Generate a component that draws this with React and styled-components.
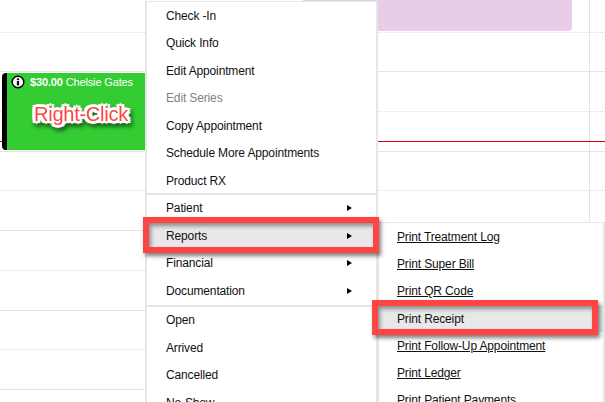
import React from "react"
import styled, { createGlobalStyle } from "styled-components"

const GlobalStyle = createGlobalStyle`
  html, body {
    margin: 0;
    padding: 0;
    background: #fff;
    font-family: "Liberation Sans", Arial, sans-serif;
  }
`

const Page = styled.div`
  position: relative;
  width: 605px;
  height: 402px;
  overflow: hidden;
  background: #fff;
`

const Columns = styled.div`
  display: flex;
  height: 100%;
`

const DayColumn = styled.div`
  width: ${p => p.$width};
  flex: ${p => (p.$grow ? 1 : "none")};
  box-sizing: border-box;
  border-right: ${p => (p.$grow ? "none" : "1px solid #e4e4e4")};
`

const Slot = styled.div`
  box-sizing: border-box;
  height: ${p => p.$height}px;
  border-bottom: 1px ${p => (p.$hour ? "solid #e4e4e4" : "dotted #dddddd")};
`

const PinkAppointment = styled.div`
  position: absolute;
  left: 303px;
  top: 0;
  width: 269px;
  height: 31px;
  background: #e8cce8;
  border-bottom-right-radius: 4px;
`

const NowLine = styled.div`
  position: absolute;
  left: 0;
  right: 0;
  top: 141px;
  height: 1px;
  background: #e60000;
`

const GreenAppointment = styled.div`
  position: absolute;
  left: 2px;
  top: 73px;
  width: 143px;
  height: 77px;
  box-sizing: border-box;
  background: #33cc33;
  border-left: 5px solid #000;
  border-radius: 4px 0 0 4px;
  color: #fff;
`

const AppointmentHead = styled.div`
  display: flex;
  align-items: center;
  gap: 5px;
  padding: 1px 0 0 4px;
  height: 15px;
  font-size: 11px;
  letter-spacing: -0.15px;
  white-space: nowrap;
`

const Price = styled.span`
  font-weight: bold;
  margin-right: 3px;
`

const Callout = styled.div`
  margin: 13px 0 0 27px;
  font-size: 20px;
  line-height: 24px;
  letter-spacing: -0.25px;
  color: #ff4444;
  white-space: nowrap;
  text-shadow:
    2px 0 0 #fff, -2px 0 0 #fff, 0 2px 0 #fff, 0 -2px 0 #fff,
    2px 2px 0 #fff, -2px 2px 0 #fff, 2px -2px 0 #fff, -2px -2px 0 #fff,
    3px 0 1px #fff, -3px 0 1px #fff, 0 3px 1px #fff, 0 -3px 1px #fff,
    3px 2px 1px #fff, -3px 2px 1px #fff, 3px -2px 1px #fff, -3px -2px 1px #fff;
  filter: drop-shadow(2px 3px 2px rgba(0, 0, 0, 0.55));
`

const Menu = styled.div`
  position: absolute;
  left: ${p => p.$left}px;
  top: ${p => p.$top}px;
  width: ${p => p.$width}px;
  box-sizing: border-box;
  background: #fff;
  border: 2px solid #e6e6e6;
  border-top-width: 1px;
  font-size: 12px;
  letter-spacing: -0.14px;
  color: #111;
`

const MenuGroup = styled.div`
  &:first-child {
    margin-bottom: -2px;
  }

  & + & {
    position: relative;
    border-top: 2px solid #e6e6e6;
  }
`

const Row = styled.div`
  position: relative;
  display: flex;
  align-items: center;
  justify-content: space-between;
  box-sizing: border-box;
  height: ${p => p.$height}px;
  padding: 0 ${p => p.$right}px 0 ${p => p.$left}px;
  white-space: nowrap;
  background: ${p => (p.$active ? "#e8e8e8" : "transparent")};
  color: ${p => (p.$muted ? "#808080" : "inherit")};
  text-decoration: ${p => (p.$link ? "underline" : "none")};
`

const Marker = styled.span`
  position: absolute;
  left: ${p => p.$left}px;
  right: ${p => p.$right}px;
  top: -5px;
  bottom: -3px;
  z-index: 5;
  border: 6px solid #ff4444;
  box-shadow:
    2px 3px 4px rgba(0, 0, 0, 0.5),
    inset 2px 3px 4px rgba(0, 0, 0, 0.4);
`

const Arrow = styled.span`
  width: 0;
  height: 0;
  border-left: 5px solid #000;
  border-top: 3.5px solid transparent;
  border-bottom: 3.5px solid transparent;
`

const slots = [
  [33, false], [39, true], [40, false], [40, true], [39, false],
  [40, true], [40, false], [40, true], [39, false], [40, true],
]

const InfoIcon = () => (
  <svg width="14" height="14" viewBox="0 0 14 14">
    <circle cx="7" cy="7" r="5.8" fill="#fff" stroke="#000" strokeWidth="1.4" />
    <rect x="5.9" y="6" width="2.2" height="4.4" fill="#000" />
    <rect x="5.9" y="3.4" width="2.2" height="1.8" fill="#000" />
  </svg>
)

const mainMenu = [
  [
    { label: "Check -In" },
    { label: "Quick Info" },
    { label: "Edit Appointment" },
    { label: "Edit Series", muted: true },
    { label: "Copy Appointment" },
    { label: "Schedule More Appointments" },
    { label: "Product RX" },
  ],
  [
    { label: "Patient", sub: true },
    { label: "Reports", sub: true, active: true },
    { label: "Financial", sub: true },
    { label: "Documentation", sub: true },
  ],
  [
    { label: "Open" },
    { label: "Arrived" },
    { label: "Cancelled" },
    { label: "No-Show" },
  ],
]

const reportItems = [
  { label: "Print Treatment Log" },
  { label: "Print Super Bill" },
  { label: "Print QR Code" },
  { label: "Print Receipt", active: true },
  { label: "Print Follow-Up Appointment" },
  { label: "Print Ledger" },
  { label: "Print Patient Payments" },
]

const App = () => (
  <Page>
    <GlobalStyle />
    <Columns>
      <DayColumn $width="590px">
        {slots.map(([height, hour], i) => (
          <Slot key={i} $height={height} $hour={hour} />
        ))}
      </DayColumn>
      <DayColumn $grow>
        {slots.map(([height, hour], i) => (
          <Slot key={i} $height={height} $hour={hour} />
        ))}
      </DayColumn>
    </Columns>
    <PinkAppointment />
    <NowLine />
    <GreenAppointment>
      <AppointmentHead>
        <InfoIcon />
        <span>
          <Price>$30.00</Price>Chelsie Gates
        </span>
      </AppointmentHead>
      <Callout>Right-Click</Callout>
    </GreenAppointment>
    <Menu $left={145} $top={1} $width={233}>
      {mainMenu.map((group, i) => (
        <MenuGroup key={i}>
          {group.map(item => (
            <Row
              key={item.label}
              $height={27.5}
              $left={19}
              $right={24}
              $active={item.active}
              $muted={item.muted}
            >
              {item.label}
              {item.sub && <Arrow />}
              {item.active && <Marker $left={-4} $right={-3} />}
            </Row>
          ))}
        </MenuGroup>
      ))}
    </Menu>
    <Menu $left={377} $top={222} $width={228}>
      {reportItems.map(item => (
        <Row
          key={item.label}
          $height={27.3}
          $left={18}
          $right={0}
          $link={!item.active}
          $active={item.active}
        >
          {item.label}
          {item.active && <Marker $left={-7} $right={5} />}
        </Row>
      ))}
    </Menu>
  </Page>
)

export default App
